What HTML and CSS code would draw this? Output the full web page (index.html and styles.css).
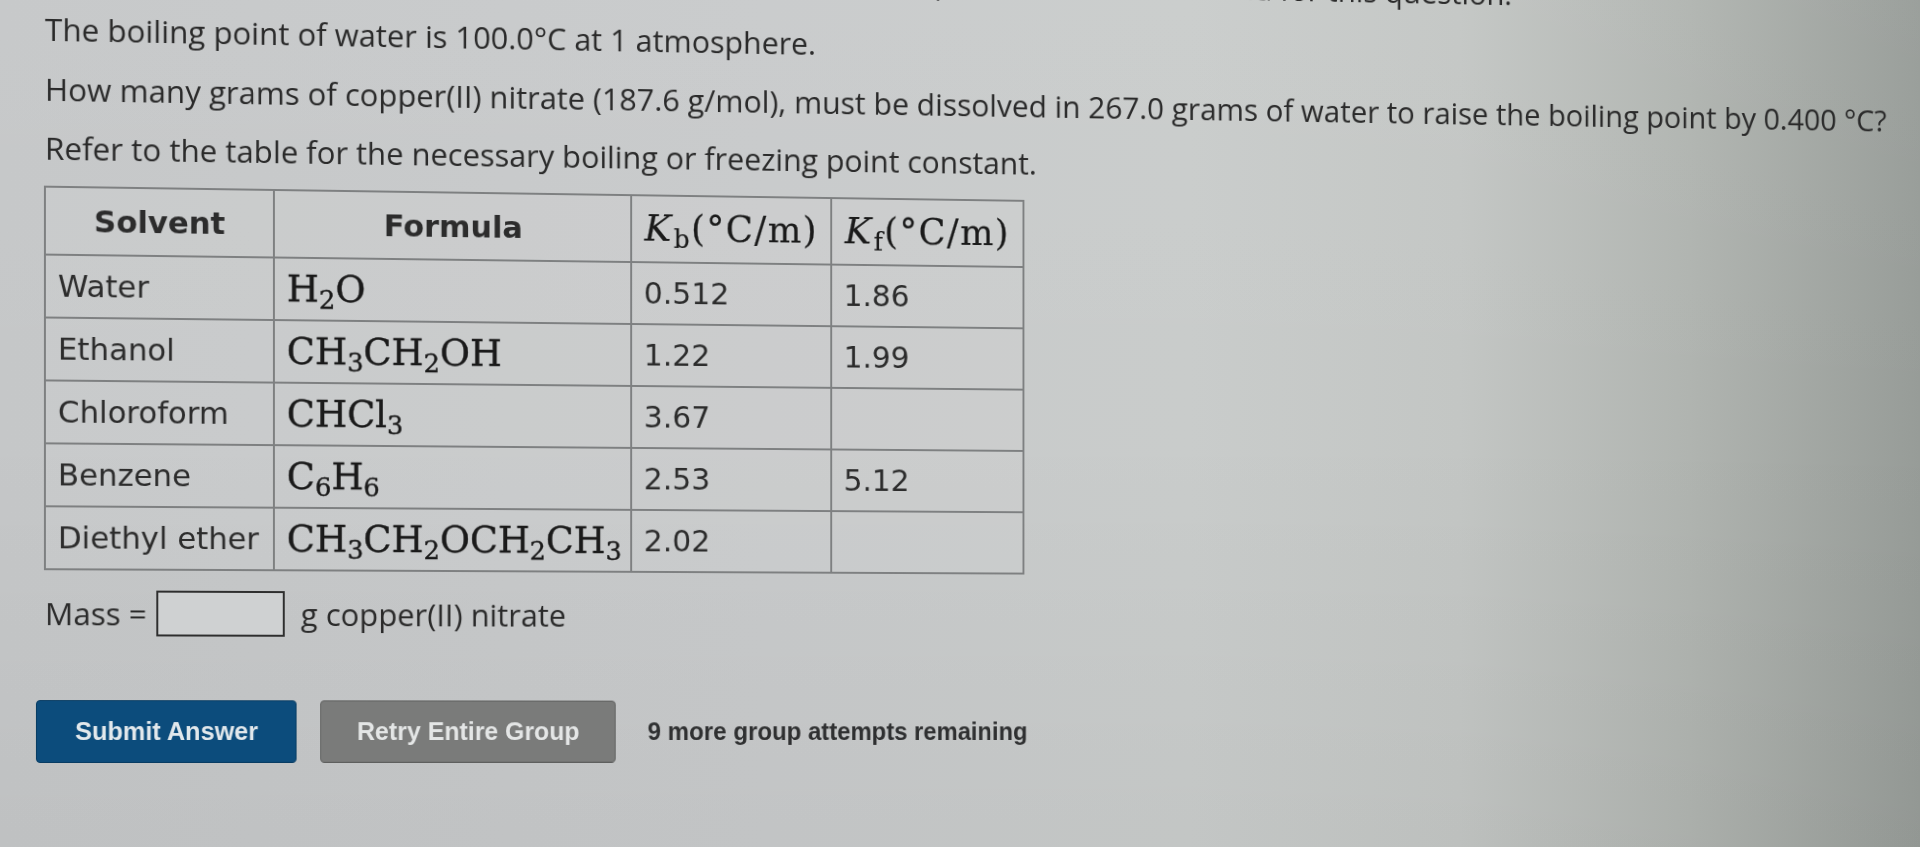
FILE: index.html
```html
<!DOCTYPE html>
<html lang="en">
<head>
<meta charset="utf-8">
<title>Boiling point elevation</title>
<link rel="stylesheet" href="styles.css">
</head>
<body>
<main class="page">
  <p class="line intro">Use the References to access important values if needed for this question.</p>
  <p class="line">The boiling point of water is 100.0°C at 1 atmosphere.</p>
  <p class="line">How many grams of copper(II) nitrate (187.6 g/mol), must be dissolved in 267.0 grams of water to raise the boiling point by 0.400 °C?</p>
  <p class="line">Refer to the table for the necessary boiling or freezing point constant.</p>

  <table class="consts">
    <colgroup>
      <col class="c1"><col class="c2"><col class="c3"><col class="c4">
    </colgroup>
    <thead>
      <tr>
        <th>Solvent</th>
        <th>Formula</th>
        <th><span class="m hm"><i>K</i><sub>b</sub>(°C/m)</span></th>
        <th><span class="m hm"><i>K</i><sub>f</sub>(°C/m)</span></th>
      </tr>
    </thead>
    <tbody>
      <tr>
        <td>Water</td>
        <td><span class="m">H<sub>2</sub>O</span></td>
        <td>0.512</td>
        <td>1.86</td>
      </tr>
      <tr>
        <td>Ethanol</td>
        <td><span class="m">CH<sub>3</sub>CH<sub>2</sub>OH</span></td>
        <td>1.22</td>
        <td>1.99</td>
      </tr>
      <tr>
        <td>Chloroform</td>
        <td><span class="m">CHCl<sub>3</sub></span></td>
        <td>3.67</td>
        <td></td>
      </tr>
      <tr>
        <td>Benzene</td>
        <td><span class="m">C<sub>6</sub>H<sub>6</sub></span></td>
        <td>2.53</td>
        <td>5.12</td>
      </tr>
      <tr>
        <td>Diethyl ether</td>
        <td><span class="m">CH<sub>3</sub>CH<sub>2</sub>OCH<sub>2</sub>CH<sub>3</sub></span></td>
        <td>2.02</td>
        <td></td>
      </tr>
    </tbody>
  </table>

  <div class="answer">
    <span class="label">Mass =</span>
    <span class="box"></span>
    <span class="unit">g copper(II) nitrate</span>
  </div>

  <div class="actions">
    <button class="btn submit" type="button">Submit Answer</button>
    <button class="btn retry" type="button">Retry Entire Group</button>
    <span class="remaining">9 more group attempts remaining</span>
  </div>
</main>
</body>
</html>
```

FILE: styles.css
```css
html, body {
  margin: 0;
  padding: 0;
  width: 1920px;
  height: 847px;
  overflow: hidden;
}

body {
  background:
    linear-gradient(180deg, rgba(255,255,255,0.04) 0%, rgba(0,0,0,0) 50%, rgba(0,0,0,0.03) 100%),
    linear-gradient(90deg, #c5c7c8 0%, #c8cacb 40%, #c9cccb 62%, #c3c6c4 76%, #b0b4b0 88%, #979c98 100%);
  color: #2a2a2a;
  font-family: "Open Sans", "Liberation Sans", sans-serif;
}

/* the screenshot is a photo of a screen taken at a slight angle:
   a mild perspective reproduces the tilt of the upper lines */
.page {
  padding: 6px 0 0 45px;
  transform-origin: 0 740px;
  transform: perspective(1000px) rotateY(1.5deg);
}

.line {
  margin: 0 0 16.5px 0;
  font-size: 31.6px;
  line-height: 43px;
  white-space: nowrap;
}

.intro {
  margin: -65px 0 22px 0;
  padding-left: 441px;
}

/* table */
.consts {
  margin: 2px 0 0 -1px;
  border-collapse: collapse;
  table-layout: fixed;
  width: 1007px;
  font-family: "DejaVu Sans", Verdana, sans-serif;
  font-size: 31px;
  color: #2c2c2c;
  background: rgba(255,255,255,0.05);
}

.c1 { width: 231px; }
.c2 { width: 366px; }
.c3 { width: 208px; }
.c4 { width: 202px; }

.consts th,
.consts td {
  border: 2px solid #7e8081;
  padding: 0 12px;
  vertical-align: middle;
  white-space: nowrap;
}

.consts thead tr { height: 68px; }
.consts tbody tr { height: 63px; }

.consts th {
  font-weight: bold;
  text-align: center;
}

.consts td { text-align: left; }

.m {
  font-family: "DejaVu Serif", "Liberation Serif", serif;
  font-size: 37.5px;
  font-weight: normal;
  color: #1a1a1a;
  -webkit-text-stroke: 0.4px #1a1a1a;
}

.m sub {
  font-size: 70%;
  line-height: 0;
  vertical-align: -0.28em;
}

.m i {
  font-style: italic;
  margin-right: 1px;
}

.consts th .hm {
  font-size: 37px;
  letter-spacing: 1.5px;
  -webkit-text-stroke: 0.2px #1a1a1a;
}

/* answer row */
.answer {
  display: flex;
  align-items: center;
  margin-top: 20px;
  font-size: 31.6px;
  line-height: 43px;
}

.box {
  box-sizing: border-box;
  width: 130px;
  height: 46px;
  margin: 0 16px 0 10px;
  border: 2px solid #2e2e2e;
  background: #cfd1d2;
}

/* actions */
.actions {
  display: flex;
  align-items: center;
  margin: 64px 0 0 -9px;
}

.btn {
  box-sizing: border-box;
  height: 63px;
  border-radius: 4px;
  font-family: "Liberation Sans", Arial, sans-serif;
  font-weight: bold;
  font-size: 25.5px;
  color: #e2e8ec;
  padding: 0;
}

.submit {
  width: 263px;
  background: #0c4c7c;
  border: 1px solid #083c63;
}

.retry {
  width: 303px;
  margin-left: 24px;
  background: #7a7b7a;
  border: 1px solid #5e5f5e;
  color: #e4e6e6;
}

.remaining {
  margin-left: 33px;
  font-family: "Liberation Sans", Arial, sans-serif;
  font-weight: bold;
  font-size: 25px;
  color: #2f3031;
}
```
